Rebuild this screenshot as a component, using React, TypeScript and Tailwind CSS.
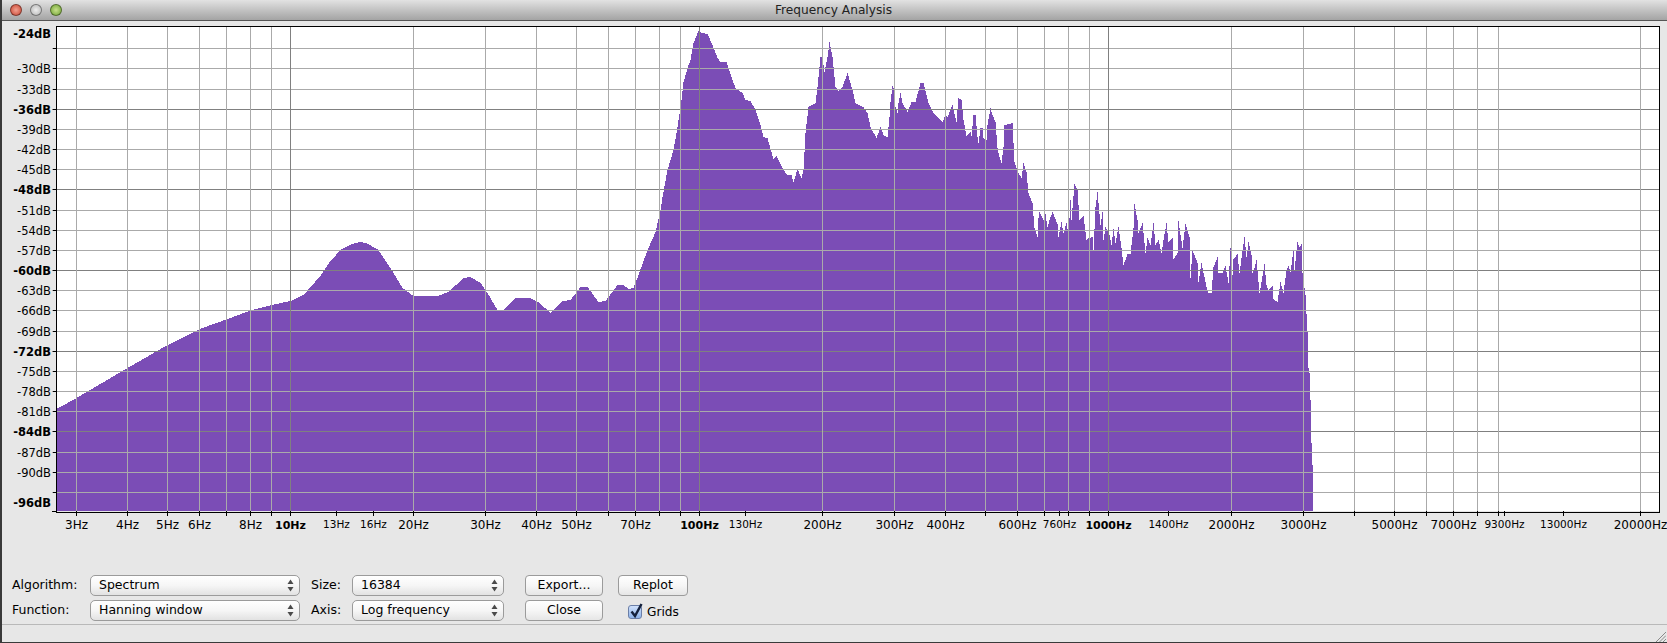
import type { ReactNode } from 'react';

// Chart geometry, in page pixels (the svg viewBox starts at the page origin offset).
const PLOT = { left: 56, right: 1659, top: 26, bottom: 511 };
const freqX = (f: number) => Math.floor(290.3 + 409 * Math.log10(f / 10)) + 0.5;

const GRID_FREQS = [
  3, 4, 5, 6, 7, 8, 9, 10, 20, 30, 40, 50, 60, 70, 80, 90, 100, 200, 300, 400, 500, 600, 700, 800,
  900, 1000, 2000, 3000, 4000, 5000, 6000, 7000, 8000, 9000, 20000,
];
const MAJOR_FREQS = [10, 100, 1000];
const EXTRA_TICKS = [13, 16, 130, 760, 1400, 9300, 13000];

const FREQ_LABELS: { f: number; kind?: 'small' | 'bold' }[] = [
  { f: 3 }, { f: 4 }, { f: 5 }, { f: 6 }, { f: 8 },
  { f: 10, kind: 'bold' },
  { f: 13, kind: 'small' }, { f: 16, kind: 'small' },
  { f: 20 }, { f: 30 }, { f: 40 }, { f: 50 }, { f: 70 },
  { f: 100, kind: 'bold' },
  { f: 130, kind: 'small' },
  { f: 200 }, { f: 300 }, { f: 400 }, { f: 600 },
  { f: 760, kind: 'small' },
  { f: 1000, kind: 'bold' },
  { f: 1400, kind: 'small' },
  { f: 2000 }, { f: 3000 }, { f: 5000 }, { f: 7000 },
  { f: 9300, kind: 'small' }, { f: 13000, kind: 'small' },
  { f: 20000 },
];

// -27 .. -93 in 3dB steps; -36, -48 ... are the heavy lines
const DB_LINES = Array.from({ length: 23 }, (_, i) => -27 - i * 3);
const dbY = (db: number) => Math.round(28 + ((-24 - db) / 3) * 20.17) + 0.5;

// Outline of the spectrum traced from the screenshot: [x, y]
const CONTOUR: [number, number][] = [
  [56, 409], [76, 398], [127, 368], [167, 345], [199, 329], [227, 319], [251, 310], [271, 305],
  [290, 301], [303, 295], [309, 288], [319, 277], [329, 262], [341, 249], [351, 244], [359, 242],
  [366, 243], [378, 250], [386, 262], [390, 268], [402, 288], [413, 296], [437, 296], [448, 292],
  [463, 278], [470, 277], [480, 283], [487, 293], [497, 310], [503, 310], [515, 298], [530, 298],
  [538, 302], [550, 313], [562, 301], [570, 300], [580, 287], [587, 287], [598, 302], [605, 301],
  [617, 285], [623, 285], [628, 289], [633, 288], [638, 275], [647, 250], [655, 232], [660, 210],
  [662, 197], [667, 170], [673, 150], [677, 127], [681, 100], [683, 82], [687, 68], [690, 60],
  [693, 43], [698, 31], [702, 33], [707, 34], [712, 45], [717, 58], [720, 62], [726, 62], [732, 80],
  [735, 88], [742, 93], [745, 100], [750, 101], [755, 110], [760, 125], [763, 137], [767, 138],
  [773, 159], [776, 156], [783, 170], [787, 175], [791, 175], [793, 182], [797, 169], [801, 178],
  [803, 170], [805, 133], [808, 107], [815, 103], [817, 87], [820, 57], [822, 57], [824, 72],
  [827, 57], [829, 42], [832, 57], [835, 87], [838, 91], [842, 87], [847, 73], [852, 90], [855, 103],
  [863, 107], [867, 113], [870, 127], [876, 138], [880, 127], [883, 135], [887, 137], [889, 117],
  [890, 102], [892, 86], [894, 90], [895, 107], [897, 113], [898, 103], [900, 93], [902, 103],
  [907, 112], [911, 102], [915, 102], [920, 83], [923, 83], [928, 103], [933, 113], [942, 122],
  [945, 115], [947, 117], [952, 105], [956, 122], [958, 98], [961, 100], [963, 120], [966, 136],
  [970, 132], [971, 136], [973, 115], [975, 115], [977, 137], [978, 143], [980, 128], [982, 128],
  [983, 138], [986, 140], [987, 125], [990, 108], [992, 115], [995, 122], [997, 148], [999, 157],
  [1001, 163], [1003, 147], [1004, 125], [1012, 123], [1014, 162], [1017, 171], [1021, 178],
  [1023, 163], [1026, 172], [1028, 193], [1032, 203], [1034, 228], [1037, 237], [1038, 218],
  [1039, 212], [1043, 220], [1045, 214], [1047, 227], [1050, 217], [1052, 212], [1057, 224],
  [1058, 237], [1061, 222], [1063, 233], [1066, 223], [1068, 235], [1070, 200], [1071, 220],
  [1074, 184], [1077, 190], [1079, 220], [1083, 216], [1086, 240], [1088, 238], [1092, 237],
  [1093, 250], [1095, 207], [1097, 192], [1100, 225], [1102, 212], [1103, 240], [1105, 227],
  [1109, 235], [1111, 245], [1113, 229], [1115, 243], [1118, 227], [1121, 248], [1123, 265],
  [1127, 254], [1130, 254], [1133, 228], [1134, 204], [1137, 220], [1138, 233], [1142, 223],
  [1145, 253], [1147, 238], [1150, 245], [1153, 223], [1155, 245], [1158, 240], [1161, 253],
  [1163, 240], [1166, 223], [1168, 242], [1172, 238], [1173, 259], [1177, 253], [1178, 221],
  [1182, 248], [1185, 224], [1189, 237], [1190, 278], [1192, 250], [1197, 263], [1198, 282],
  [1201, 263], [1206, 287], [1208, 293], [1211, 293], [1213, 267], [1217, 257], [1218, 273],
  [1222, 273], [1225, 266], [1228, 283], [1230, 248], [1232, 275], [1233, 259], [1237, 254],
  [1239, 273], [1241, 258], [1244, 237], [1246, 257], [1248, 242], [1251, 255], [1252, 273],
  [1254, 268], [1256, 260], [1259, 293], [1261, 282], [1264, 264], [1266, 285], [1268, 290],
  [1272, 286], [1273, 299], [1277, 302], [1280, 282], [1283, 293], [1286, 270], [1288, 266],
  [1290, 272], [1293, 250], [1294, 270], [1297, 242], [1299, 247], [1301, 244], [1302, 273],
  [1305, 295], [1307, 332], [1308, 368], [1309, 373], [1310, 400], [1311, 443], [1312, 465],
];

function spectrumPath() {
  let d = `M57 ${PLOT.bottom}`;
  let seg = 0;
  for (let x = 57; x < 1313; x++) {
    while (seg < CONTOUR.length - 2 && CONTOUR[seg + 1][0] < x) seg++;
    const [x0, y0] = CONTOUR[seg];
    const [x1, y1] = CONTOUR[seg + 1];
    const y = Math.round(y0 + ((y1 - y0) * (x - x0)) / (x1 - x0));
    d += `V${y}H${x + 1}`;
  }
  return `${d}V${PLOT.bottom}Z`;
}

function Chart() {
  const ticks = [...GRID_FREQS, ...EXTRA_TICKS];
  return (
    <svg viewBox="2 21 1665 553" className="block h-[553px] w-[1665px]">
      <rect x={PLOT.left} y={PLOT.top} width={PLOT.right - PLOT.left} height={PLOT.bottom - PLOT.top} fill="#ffffff" />
      <path d={spectrumPath()} fill="#7b4db6" shapeRendering="crispEdges" />

      <g shapeRendering="crispEdges" strokeWidth={1}>
        {DB_LINES.map((db) => (
          <line
            key={db}
            x1={52}
            x2={PLOT.right}
            y1={dbY(db)}
            y2={dbY(db)}
            stroke={db % 12 === 0 ? '#808080' : '#aaaaaa'}
          />
        ))}
        {GRID_FREQS.map((f) => (
          <line
            key={f}
            x1={freqX(f)}
            x2={freqX(f)}
            y1={PLOT.top}
            y2={PLOT.bottom}
            stroke={MAJOR_FREQS.includes(f) ? '#808080' : '#aaaaaa'}
          />
        ))}
        {ticks.map((f) => (
          <line key={f} x1={freqX(f)} x2={freqX(f)} y1={PLOT.bottom} y2={PLOT.bottom + 5} stroke="#000000" />
        ))}
        {DB_LINES.map((db) => (
          <line key={db} x1={53} x2={57} y1={dbY(db)} y2={dbY(db)} stroke="#000000" />
        ))}
        <line x1={52} x2={57} y1={511.5} y2={511.5} stroke="#000000" />
        <rect x={PLOT.left} y={PLOT.top} width={PLOT.right - PLOT.left} height={PLOT.bottom - PLOT.top + 1} fill="none" stroke="#000000" />
      </g>

      <text x={51} y={38} textAnchor="end" className="fill-black text-[11.5px] font-bold">-24dB</text>
      {DB_LINES.filter((db) => db !== -27 && db !== -93).map((db) => (
        <text
          key={db}
          x={51}
          y={dbY(db) + 4}
          textAnchor="end"
          className={db % 12 === 0 ? 'fill-black text-[11.5px] font-bold' : 'fill-black text-[11.5px]'}
        >
          {db}dB
        </text>
      ))}
      <text x={51} y={507} textAnchor="end" className="fill-black text-[11.5px] font-bold">-96dB</text>

      {FREQ_LABELS.map(({ f, kind }) => (
        <text
          key={f}
          x={freqX(f)}
          y={kind === 'small' ? 528 : 529}
          textAnchor="middle"
          className={
            kind === 'small'
              ? 'fill-black text-[10.5px]'
              : kind === 'bold'
                ? 'fill-black text-[11px] font-bold'
                : 'fill-black text-[12px]'
          }
        >
          {f}Hz
        </text>
      ))}
    </svg>
  );
}

function TrafficLight({ className }: { className: string }) {
  return <span className={`h-3 w-3 rounded-full border border-black/40 ${className}`} />;
}

function Select({ value }: { value: string }) {
  return (
    <div className="flex h-[21px] items-center justify-between rounded-[5px] border border-[#9b9b9b] bg-linear-to-b from-white via-[#f6f6f6] to-[#e2e2e2] pr-[5px] pl-[8px] text-[12.5px]">
      <span>{value}</span>
      <svg viewBox="0 0 7 13" className="h-[13px] w-[7px]">
        <path d="M3.5 0.5 L6.5 5 H0.5 Z" fill="#4a4a4a" />
        <path d="M3.5 12.5 L6.5 8 H0.5 Z" fill="#4a4a4a" />
      </svg>
    </div>
  );
}

function PushButton({ children }: { children: ReactNode }) {
  return (
    <button className="flex h-[21px] items-center justify-center rounded-[4px] border border-[#9b9b9b] bg-linear-to-b from-white via-[#f6f6f6] to-[#e6e6e6] text-[12.5px]">
      {children}
    </button>
  );
}

function Label({ children, className = '' }: { children: ReactNode; className?: string }) {
  return <span className={`flex h-[21px] items-center text-[12.5px] ${className}`}>{children}</span>;
}

export default function App() {
  return (
    <div className="relative flex h-[643px] w-[1667px] flex-col overflow-hidden border-b border-l-2 border-[#3a3a3a] bg-[#e7e7e7] font-['DejaVu_Sans',sans-serif] text-black">
      <span className="absolute top-[28px] -left-[2px] h-[10px] w-[2px] bg-[#a06a70]" />
      <span className="absolute top-[49px] -left-[2px] h-[12px] w-[2px] bg-[#7fa05c]" />

      <div className="relative flex h-[21px] shrink-0 items-center border-b border-[#555] bg-linear-to-b from-[#e2e2e2] to-[#a4a4a4]">
        <div className="flex items-center gap-[8px] pl-[8px]">
          <TrafficLight className="bg-radial from-[#f0a090] to-[#c8402f]" />
          <TrafficLight className="bg-radial from-[#eeeeee] to-[#b4b4b4]" />
          <TrafficLight className="bg-radial from-[#c8e08a] to-[#6fa32f]" />
        </div>
        <span className="absolute left-[773px] text-[12.2px] text-[#222]">Frequency Analysis</span>
      </div>

      <Chart />

      <div className="grid shrink-0 grid-cols-[78px_210px_52px_152px_21px_78px_15px_70px] gap-y-[4px] pt-px pb-[3px] pl-[10px]">
        <Label>Algorithm:</Label>
        <Select value="Spectrum" />
        <Label className="pl-[11px]">Size:</Label>
        <Select value="16384" />
        <span />
        <PushButton>Export...</PushButton>
        <span />
        <PushButton>Replot</PushButton>

        <Label>Function:</Label>
        <Select value="Hanning window" />
        <Label className="pl-[11px]">Axis:</Label>
        <Select value="Log frequency" />
        <span />
        <PushButton>Close</PushButton>
        <span />
        <div className="flex h-[21px] items-center gap-[5px] pt-[3px] pl-[10px] text-[12.2px]">
          <span className="relative h-[14px] w-[14px] rounded-[3px] border border-[#6b7fa8] bg-linear-to-b from-[#cfe0fb] to-[#8fb4ea]">
            <svg viewBox="0 0 16 18" className="absolute -top-[4px] -left-px h-[18px] w-[16px]">
              <path d="M3.5 9.5 L7 14 L13.5 2" fill="none" stroke="#14213d" strokeWidth="2.4" />
            </svg>
          </span>
          Grids
        </div>
      </div>

      <div className="flex flex-1 items-end justify-end border-t border-[#b9b9b9]">
        <svg viewBox="0 0 11 10" className="mr-[1px] h-[10px] w-[11px]">
          <path d="M1 10 L11 0 M4.5 10 L11 3.5 M8 10 L11 7" stroke="#8a8a8a" strokeWidth="1" />
        </svg>
      </div>
    </div>
  );
}
